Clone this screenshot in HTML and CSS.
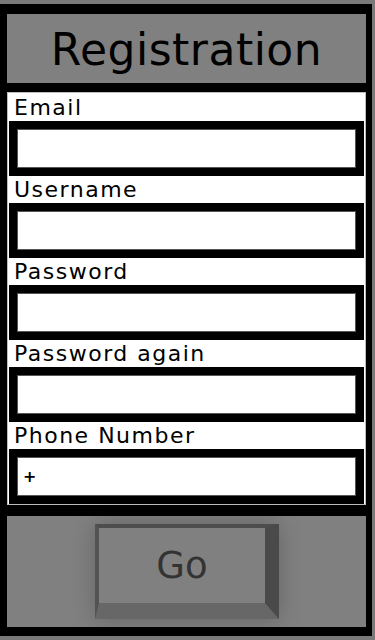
FILE: index.html
```html
<!DOCTYPE html>
<html lang="en">
<head>
<meta charset="utf-8">
<meta name="viewport" content="width=device-width, initial-scale=1">
<title>Registration</title>
<link rel="stylesheet" href="styles.css">
</head>
<body>
<div class="frame">
  <header class="title-bar">
    <h1 class="title">Registration</h1>
  </header>
  <form class="panel">
    <label class="field">
      <span class="label">Email</span>
      <input class="input" type="text">
    </label>
    <label class="field">
      <span class="label">Username</span>
      <input class="input" type="text">
    </label>
    <label class="field">
      <span class="label">Password</span>
      <input class="input" type="password">
    </label>
    <label class="field">
      <span class="label">Password again</span>
      <input class="input" type="password">
    </label>
    <label class="field">
      <span class="label">Phone Number</span>
      <input class="input" type="text" value="+">
    </label>
  </form>
  <div class="actions">
    <button class="go" type="button">Go</button>
  </div>
</div>
</body>
</html>
```

FILE: styles.css
```css
* { box-sizing: border-box; }

html, body {
  margin: 0;
  padding: 0;
}

body {
  background: #7a7a7a;
  font-family: "DejaVu Sans", "Liberation Sans", sans-serif;
  width: 375px;
  height: 640px;
  overflow: hidden;
}

.frame {
  margin: 4px 3px 4px 0;
  height: 632px;
  background: #000;
  padding: 10px 6px 9px 7px;
  display: flex;
  flex-direction: column;
}

.title-bar {
  height: 69px;
  background: #808080;
  display: flex;
  align-items: center;
  justify-content: center;
  flex: none;
}

.title {
  margin: 0;
  font-size: 44px;
  font-weight: normal;
  color: #000;
  letter-spacing: 0.5px;
  line-height: 1;
  padding-top: 2px;
}

.panel {
  margin: 9px 0 0;
  height: 413px;
  flex: none;
  background: #fff;
  box-shadow: inset 0 0 0 1px #bdbdbd;
  padding: 2px 2px 1px;
  display: flex;
  flex-direction: column;
}

.field {
  display: flex;
  flex-direction: column;
}

.label {
  height: 27px;
  line-height: 27px;
  font-size: 22px;
  letter-spacing: 1.5px;
  color: #000;
  padding-left: 5px;
}

.input {
  display: block;
  width: 100%;
  height: 55px;
  margin: 0;
  border: 8px solid #000;
  box-shadow: inset 0 0 0 1px #555;
  background: #fff;
  padding: 0 0 0 6px;
  font-family: "DejaVu Sans", sans-serif;
  font-size: 16px;
  font-weight: bold;
  color: #000;
  outline: none;
}

.actions {
  margin-top: 11px;
  height: 111px;
  flex: none;
  background: #808080;
  display: flex;
  align-items: center;
  justify-content: center;
}

.go {
  width: 184px;
  height: 95px;
  margin-left: 1px;
  background: #808080;
  border-style: solid;
  border-width: 4px 14px 16px 4px;
  border-color: #4d4d4d #4a4a4a #676767 #535353;
  box-shadow: 0 0 22px rgba(0, 0, 0, 0.22);
  font-family: "DejaVu Sans", sans-serif;
  font-size: 37px;
  color: #333;
  padding: 0;
  line-height: 1;
}
```
